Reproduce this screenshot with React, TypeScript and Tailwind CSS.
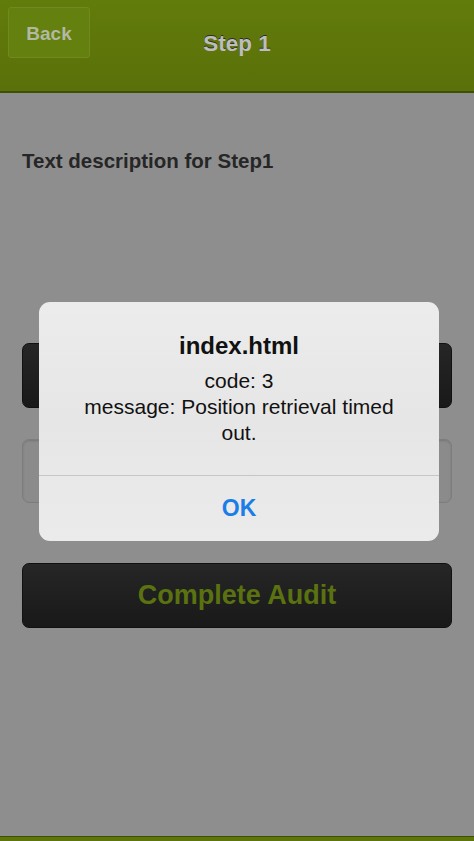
import React from "react";

const font = { fontFamily: '"Liberation Sans", Arial, sans-serif' };

export default function App() {
  return (
    <div className="relative w-[474px] h-[841px] overflow-hidden bg-[#8e8e8e] flex flex-col" style={font}>
      {/* header */}
      <header className="relative h-[93px] shrink-0 bg-gradient-to-b from-[#627c0b] to-[#5a7009] border-b-2 border-[#3f4f06]">
        <div className="flex items-start px-2 pt-[7px]">
          <button className="w-[82px] h-[51px] rounded-[3px] bg-[#64800e] border border-[#71891f] text-[#b3b8a2] text-[19px] font-bold pt-[3px]">
            Back
          </button>
        </div>
        <h1 className="absolute left-0 right-0 top-[27px] text-center text-[22.5px] font-bold text-[#bdbdbd] [text-shadow:0_-1px_0_#2c2c2c]">
          Step 1
        </h1>
      </header>

      {/* content */}
      <main className="flex-1 flex flex-col px-[22px]">
        <p className="mt-[53px] text-[20.5px] font-bold text-[#262626]">Text description for Step1</p>

        <div className="mt-[166px] h-[65px] rounded-[7px] bg-gradient-to-b from-[#262626] to-[#191919] border border-[#111]" />

        <div className="mt-[31px] h-[64px] rounded-[7px] bg-[#8b8b8b] border border-[#7d7d7d] shadow-[inset_0_1px_2px_rgba(0,0,0,0.15)]" />

        <button className="mt-[60px] h-[65px] rounded-[7px] bg-gradient-to-b from-[#262626] to-[#191919] border border-[#111] text-[27px] font-bold text-[#5b7210]">
          Complete Audit
        </button>
      </main>

      {/* bottom bar */}
      <footer className="h-[5px] shrink-0 bg-[#5e750a] border-t border-[#3f4f06]" />

      {/* alert */}
      <div className="absolute left-[39px] top-[302px] w-[400px] rounded-[11px] bg-gradient-to-b from-[#ececec] via-[#e6e6e6] to-[#ebebeb] overflow-hidden">
        <div className="flex flex-col items-center px-[34px] pt-[28px] pb-[29px] text-center text-[#111]">
          <h2 className="text-[24px] font-bold leading-[32px]">index.html</h2>
          <p className="mt-[6px] text-[21px] leading-[26px]">
            code: 3
            <br />
            message: Position retrieval timed out.
          </p>
        </div>
        <div className="h-px bg-[#c6c6c6]" />
        <button className="w-full h-[65px] text-[23px] font-bold text-[#1a7ee6]">OK</button>
      </div>
    </div>
  );
}
